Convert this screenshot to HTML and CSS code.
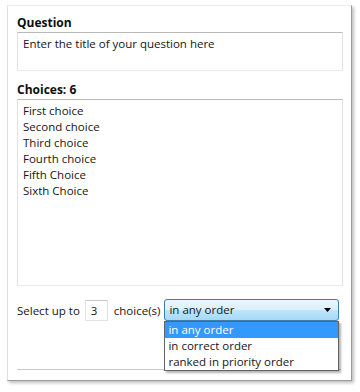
FILE: index.html
```html
<!DOCTYPE html>
<html>
<head>
<meta charset="utf-8">
<link rel="stylesheet" href="styles.css">
</head>
<body>
<div class="panel">
  <div class="label">Question</div>
  <div class="textbox question">Enter the title of your question here</div>
  <div class="label choices-label">Choices: 6</div>
  <div class="textbox choices">
    <div>First choice</div>
    <div>Second choice</div>
    <div>Third choice</div>
    <div>Fourth choice</div>
    <div>Fifth Choice</div>
    <div>Sixth Choice</div>
  </div>
  <div class="row">
    <span>Select up to</span>
    <span class="num">3</span>
    <span>choice(s)</span>
    <div class="combo">
      <div class="combo-box">
        <span>in any order</span>
        <svg class="arrow" width="7" height="4" viewBox="0 0 7 4"><path d="M0 0H7L3.5 4Z" fill="#000"/></svg>
      </div>
      <div class="list">
        <div class="item selected">in any order</div>
        <div class="item">in correct order</div>
        <div class="item">ranked in priority order</div>
      </div>
    </div>
  </div>
  <div class="sep"></div>
</div>
</body>
</html>
```
FILE: styles.css
```css
html, body {
  margin: 0;
  padding: 0;
  background: #fff;
}
body {
  font-family: "Open Sans", "Noto Sans", sans-serif;
  font-size: 11.5px;
  color: #151515;
  width: 360px;
  height: 392px;
  overflow: hidden;
}
.panel {
  margin: 5px 0 0 7px;
  width: 326px;
  height: 361px;
  padding: 7px 8px 6px 9px;
  border-top: 1px solid #ececec;
  border-left: 1px solid #e0e0e0;
  border-right: 1px solid #9a9a9a;
  border-bottom: 1px solid #9a9a9a;
  box-shadow: 2px 2px 3px rgba(0,0,0,0.25);
  display: flex;
  flex-direction: column;
}
.label {
  font-weight: bold;
  color: #0d0d0d;
  line-height: 19px;
  height: 19px;
  font-size: 12px;
}
.textbox {
  border-top: 1px solid #b8b9bd;
  border-left: 1px solid #e2e3ea;
  border-right: 1px solid #e2e3ea;
  border-bottom: 1px solid #e8ecf0;
  padding: 2px 5px;
  line-height: 16px;
}
.question {
  height: 34px;
  padding-top: 3px;
  padding-bottom: 0;
}
.choices-label {
  margin-top: 10px;
  height: 18px;
  line-height: 18px;
}
.choices {
  height: 180px;
  padding-top: 3px;
}
.row {
  display: flex;
  align-items: center;
  margin-top: 13px;
  height: 22px;
  position: relative;
}
.num {
  width: 16px;
  height: 19px;
  line-height: 19px;
  padding-left: 5px;
  border: 1px solid #e2e3ea;
  border-top-color: #c8c9cd;
  margin: 0 6px 0 5px;
}
.combo {
  position: relative;
  margin-left: 4px;
  width: 175px;
  height: 22px;
}
.combo-box {
  box-sizing: border-box;
  height: 22px;
  border: 1px solid #3c7fb1;
  border-radius: 3px;
  background: linear-gradient(#eaf6fd 0%, #d9f0fc 50%, #bee6fd 50%, #a7d9f5 100%);
  display: flex;
  align-items: center;
  justify-content: space-between;
  padding: 0 7px 0 4px;
  line-height: 20px;
}
.arrow {
  display: block;
}
.list {
  position: absolute;
  top: 22px;
  left: 0;
  width: 175px;
  box-sizing: border-box;
  background: #fff;
  border: 1px solid #646464;
  box-shadow: 2px 2px 2px rgba(0,0,0,0.3);
  z-index: 2;
}
.item {
  height: 16px;
  line-height: 16px;
  padding-left: 3px;
  white-space: nowrap;
}
.item.selected {
  background: #3399ff;
  color: #fff;
}
.sep {
  margin-top: auto;
  height: 1px;
  background: #c8c8c8;
  margin-right: 2px;
  margin-bottom: 4px;
}
```
